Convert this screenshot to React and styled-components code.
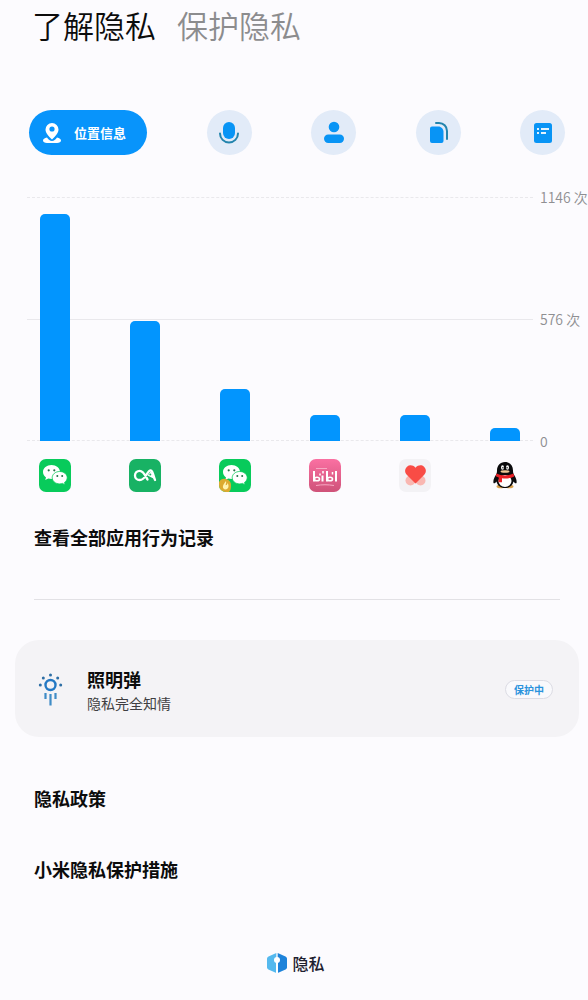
import React, { useState } from 'react';
import styled, { createGlobalStyle } from 'styled-components';

const GlobalStyle = createGlobalStyle`
  * {
    box-sizing: border-box;
  }

  body {
    margin: 0;
    background-color: #fcfbfe;
    color: #0c0c0c;
    font-family: "Noto Sans CJK SC", sans-serif;
  }

  button {
    font-family: inherit;
    cursor: pointer;
  }
`;

const Page = styled.div`
  display: flex;
  flex-direction: column;
  min-height: 100vh;
  overflow-x: hidden;
`;

const Header = styled.header`
  display: flex;
  gap: 21px;
  padding: 2px 32px 0;
`;

const HeaderTab = styled.button`
  border: none;
  padding: 0;
  background: none;
  color: ${props => props.$active ? '#0c0c0c' : '#8c8c8e'};
  font-size: 31px;
  font-weight: 350;
  line-height: 46px;
`;

const Permissions = styled.nav`
  display: flex;
  justify-content: space-between;
  align-items: center;
  padding: 62px 23px 0 29px;
`;

const PermissionButton = styled.button`
  display: flex;
  align-items: center;
  justify-content: ${props => props.$active ? 'flex-start' : 'center'};
  gap: 12px;
  width: ${props => props.$active ? '118px' : '45px'};
  height: 45px;
  border: none;
  border-radius: 23px;
  padding: ${props => props.$active ? '0 0 0 13px' : '0'};
  background-color: ${props => props.$active ? '#0894fb' : '#e2ebf8'};
  color: ${props => props.$active ? '#ffffff' : '#0894f5'};
  font-size: 13px;
  font-weight: 700;
  white-space: nowrap;

  svg {
    flex: none;
  }
`;

const Chart = styled.section`
  display: grid;
  grid-template-columns: 1fr 48px;
  column-gap: 7px;
  padding: 32px 0 0 27px;
`;

const Plot = styled.div`
  display: grid;
  height: 264px;
  padding: 10px 0;
`;

const GridLines = styled.div`
  grid-area: 1 / 1;
  display: flex;
  flex-direction: column;
  justify-content: space-between;
`;

const GridLine = styled.div`
  border-top: 1px ${props => props.$dashed ? 'dashed' : 'solid'} #e9e8ec;
`;

const Bars = styled.div`
  grid-area: 1 / 1;
  display: flex;
  justify-content: space-between;
  align-items: flex-end;
  padding: 0 13px;
`;

const Bar = styled.div`
  width: 30px;
  border-radius: 5px 5px 0 0;
  background-color: #0295fe;
`;

const Scale = styled.div`
  display: flex;
  flex-direction: column;
  justify-content: space-between;
  color: #8f8f92;
  font-size: 14px;
  font-weight: 350;
  line-height: 20px;
  white-space: nowrap;
`;

const Apps = styled.div`
  display: flex;
  justify-content: space-between;
  padding: 8px 12px 0;

  svg {
    display: block;
  }
`;

const RowLink = styled.a`
  display: block;
  padding: 0 34px;
  color: #0c0c0c;
  font-size: 18px;
  font-weight: 700;
  line-height: 26px;
  text-decoration: none;
`;

const Records = styled.section`
  padding-top: 32px;
`;

const Divider = styled.hr`
  width: auto;
  margin: 49px 28px 0 34px;
  border: none;
  border-top: 1px solid #e2e1e5;
`;

const FlareCard = styled.section`
  display: flex;
  align-items: center;
  margin: 40px 9px 0 15px;
  padding: 25px 26px 24px 23px;
  border-radius: 24px;
  background-color: #f4f3f6;
`;

const FlareText = styled.div`
  flex: 1;
  margin-left: 24px;
`;

const FlareTitle = styled.h2`
  margin: 0;
  font-size: 18px;
  font-weight: 700;
  line-height: 28px;
`;

const FlareNote = styled.p`
  margin: 0;
  color: #3f3f42;
  font-size: 14px;
  line-height: 20px;
`;

const Badge = styled.span`
  border: 1px solid #dcdce4;
  border-radius: 10px;
  padding: 0 8px;
  background-color: #f9f9fc;
  color: #2a93dc;
  font-size: 10px;
  font-weight: 700;
  line-height: 17px;
`;

const Policies = styled.section`
  display: flex;
  flex-direction: column;
  gap: 45px;
  padding-top: 48px;
`;

const Footer = styled.footer`
  display: flex;
  justify-content: center;
  align-items: center;
  gap: 5px;
  padding: 69px 0 20px 4px;
  color: #20202e;
  font-size: 16px;
  font-weight: 500;
  line-height: 24px;
`;

const LocationIcon = () => (
  <svg width="20" height="22" viewBox="0 0 20 22" fill="none">
    <path d="M5 15.500C2.500 16 1 17 1 18.500c0 1.500 1.500 2.500 4 2.500h10c2.500 0 4-1 4-2.500 0-1.500-1.500-2.500-4-3-1.500 2-3 3.500-5 3.500s-3.500-1.500-5-3.500z" fill="currentColor" />
    <path d="M10 1a6.500 6.500 0 0 0-6.500 6.500C3.500 11 6.500 14 10 17.500 13.500 14 16.500 11 16.500 7.500A6.500 6.500 0 0 0 10 1z" fill="currentColor" />
    <circle cx="10" cy="7" r="2.600" fill="#0894fb" />
  </svg>
);

const MicIcon = () => (
  <svg width="22" height="24" viewBox="0 0 22 24" fill="none">
    <rect x="5" y="1" width="12" height="17" rx="6" fill="currentColor" />
    <path d="M2 12.500a9 9 0 0 0 18 0" stroke="#2384ad" strokeWidth="2" strokeLinecap="round" />
  </svg>
);

const ContactIcon = () => (
  <svg width="22" height="24" viewBox="0 0 22 24" fill="currentColor">
    <circle cx="11" cy="6" r="5.300" />
    <rect x="1" y="13.500" width="20" height="8.500" rx="4.200" />
  </svg>
);

const FilesIcon = () => (
  <svg width="22" height="24" viewBox="0 0 22 24" fill="none">
    <path d="M5 5.500h6.500c2.500 0 5 2.500 5 5V20a2 2 0 0 1-2 2H5a2 2 0 0 1-2-2V7.500a2 2 0 0 1 2-2z" fill="currentColor" />
    <path d="M9 2h3c4.500 0 8 3.500 8 8v8" stroke="#2384ad" strokeWidth="2" strokeLinecap="round" />
  </svg>
);

const NoteIcon = () => (
  <svg width="20" height="24" viewBox="0 0 20 24" fill="none">
    <rect x="1" y="2" width="18" height="20" rx="2.500" fill="currentColor" />
    <path d="M4 8h2M8 8h8M4 12h2M8 12h5" stroke="#e2f3fd" strokeWidth="2" />
  </svg>
);

const WeChatIcon = ({ twin }) => (
  <svg width="32" height="33" viewBox="0 0 32 33">
    <rect width="32" height="33" rx="7" fill="#08cb5b" />
    <path d="M12.500 6C7.800 6 4 9 4 13c0 2.200 1.100 4.100 3 5.400l-.8 2.600 3.100-1.600c1 .3 2.100.5 3.200.5 4.700 0 8.500-3 8.500-6.900S17.200 6 12.500 6z" fill="#fff" />
    <path d="M20.700 12.500c-4.300 0-7.500 2.800-7.500 6.200s3.300 6.200 7.500 6.200c1 0 2-.2 2.800-.5l2.700 1.500-.7-2.500c1.700-1.200 2.700-2.800 2.700-4.700 0-3.400-3.300-6.200-7.500-6.200z" fill="#fff" stroke="#08cb5b" strokeWidth=".8" />
    <circle cx="9.700" cy="11.300" r="1.100" fill="#267448" />
    <circle cx="15.300" cy="11.300" r="1.100" fill="#267448" />
    <circle cx="18.300" cy="17" r="1" fill="#267448" />
    <circle cx="23.200" cy="17" r="1" fill="#267448" />
    {twin && (
      <>
        <path d="M0 23a6.500 6.500 0 0 1 12 4c0 2.500-.5 4.500-2 6H7a7 7 0 0 1-7-7z" fill="#dcaa30" />
        <path d="M7 22c.8 2-.8 3-.2 4.200C8 26 8.500 25 8.500 24c2 3 1 6-2 6.500C3 30 3 26.500 7 22z" fill="#fff3b0" />
      </>
    )}
  </svg>
);

const LoopIcon = () => (
  <svg width="32" height="33" viewBox="0 0 32 33" fill="none">
    <rect width="32" height="33" rx="7" fill="#18b264" />
    <path d="M18.500 20.500C16.500 17 14.500 11.800 10.800 11.800c-2.800 0-4.800 2-4.800 4.700s2 4.500 4.600 4.500c3.400 0 5.400-2.800 7-5.500 1.200-2 2.400-4.200 4-4.200 1.400 0 2 2.200 4.400 9.700" stroke="#fff" strokeWidth="2.300" strokeLinejoin="round" strokeLinecap="round" />
    <path d="M18.500 16.500l7 3.500-3.500-8z" fill="#fff" />
    <circle cx="21.300" cy="15.500" r="1" fill="#18b264" />
  </svg>
);

const BiliIcon = () => (
  <svg width="32" height="33" viewBox="0 0 32 33">
    <defs>
      <linearGradient id="pink" x1="0" y1="0" x2="0" y2="1">
        <stop offset="0" stopColor="#fa70a2" />
        <stop offset="1" stopColor="#cf5279" />
      </linearGradient>
    </defs>
    <rect width="32" height="33" rx="7" fill="url(#pink)" />
    <path d="M7 9.500h11M7 26.500c6-1 12-1 18 0" stroke="#f7a8c3" strokeWidth="1" fill="none" />
    <path d="M5 12v10.500M13.500 16.500v6M18 12v10.500M27 12v10.500" stroke="#fff" strokeWidth="2" />
    <ellipse cx="8" cy="20" rx="2.500" ry="1.800" stroke="#fff" strokeWidth="1.600" fill="none" />
    <ellipse cx="21" cy="20" rx="2.500" ry="1.800" stroke="#fff" strokeWidth="1.600" fill="none" />
    <path d="M11 14.500v2M14 12v2.500M23.500 13v2.500" stroke="#fff" strokeWidth="1.500" />
  </svg>
);

const HealthIcon = () => (
  <svg width="32" height="33" viewBox="0 0 32 33">
    <rect width="32" height="33" rx="7" fill="#f3f2f5" />
    <circle cx="11.500" cy="21.500" r="5" fill="#f9b7b1" />
    <circle cx="21.500" cy="21.500" r="5" fill="#f9b7b1" />
    <path d="M16.500 24.500L8 16c-2.500-2.500-2.500-6 0-8.300 2.500-2.200 6-1.700 8.500 1 2.500-2.700 6-3.200 8.500-1 2.500 2.300 2.500 5.800 0 8.300z" fill="#f94c45" />
  </svg>
);

const PenguinIcon = () => (
  <svg width="32" height="33" viewBox="0 0 32 33">
    <ellipse cx="11.500" cy="27.500" rx="4" ry="1.800" fill="#d9a04a" />
    <ellipse cx="20.500" cy="27.500" rx="4" ry="1.800" fill="#d9a04a" />
    <path d="M16 3c-5 0-8 3.700-8 8.500 0 2-.3 3-1.200 4.500-1.800 3-2.800 5.500-2.300 8 .7 1 2-.2 3-1.500C8.500 26.800 11.500 29 16 29s7.500-2.200 8.500-6.500c1 1.300 2.300 2.500 3 1.500.5-2.500-.5-5-2.300-8-.9-1.500-1.200-2.500-1.200-4.500C24 6.700 21 3 16 3z" fill="#0b0b0d" />
    <ellipse cx="16" cy="22" rx="6.500" ry="6" fill="#fff" />
    <ellipse cx="13.500" cy="8.500" rx="1.500" ry="2.300" fill="#fff" />
    <ellipse cx="18.500" cy="8.500" rx="1.500" ry="2.300" fill="#fff" />
    <circle cx="13.900" cy="8.800" r=".7" fill="#111" />
    <circle cx="18.100" cy="8.800" r=".7" fill="#111" />
    <ellipse cx="16" cy="12.500" rx="4.500" ry="1.300" fill="#efc795" />
    <path d="M7.500 14.500c5 2.500 12 2.500 17 0l.7 3c-3.500 1.800-8 2.300-12.200 1.800v4H9.500l.3-4.700-3-1.300z" fill="#ea1f25" />
  </svg>
);

const FlareIcon = () => (
  <svg width="25" height="33" viewBox="0 0 25 33" fill="none">
    <circle cx="12.500" cy="12" r="5" stroke="#2479c4" strokeWidth="2.400" />
    <g fill="#2d6ea5">
      <circle cx="12.500" cy="2" r="1.500" />
      <circle cx="5.300" cy="5" r="1.500" />
      <circle cx="19.700" cy="5" r="1.500" />
      <circle cx="2.300" cy="12" r="1.500" />
      <circle cx="22.700" cy="12" r="1.500" />
    </g>
    <path d="M7.500 20v6M12.500 21v11.500M17.500 20v6" stroke="#3f8cc6" strokeWidth="2.200" />
  </svg>
);

const PrivacyLogo = () => (
  <svg width="20" height="22" viewBox="0 0 20 22">
    <path d="M9.300 1L1.500 4.500C.6 5 0 5.700 0 6.700v8.600c0 1 .5 1.700 1.400 2.200L9.300 21z" fill="#55b9ee" />
    <path d="M10.700 1l7.800 3.500c.9.500 1.500 1.200 1.500 2.200v8.600c0 1-.5 1.700-1.400 2.200L10.700 21z" fill="#1e83da" />
    <circle cx="10" cy="8" r="3" fill="#fff" />
    <path d="M9 8h2v13H9z" fill="#fff" />
  </svg>
);

const permissions = [
  { id: 'location', label: '位置信息', icon: <LocationIcon /> },
  { id: 'mic', label: '麦克风', icon: <MicIcon /> },
  { id: 'contacts', label: '联系人', icon: <ContactIcon /> },
  { id: 'files', label: '文件', icon: <FilesIcon /> },
  { id: 'notes', label: '记录', icon: <NoteIcon /> },
];

const apps = [
  { id: 1, count: 1066, icon: <WeChatIcon /> },
  { id: 2, count: 564, icon: <LoopIcon /> },
  { id: 3, count: 242, icon: <WeChatIcon twin /> },
  { id: 4, count: 122, icon: <BiliIcon /> },
  { id: 5, count: 122, icon: <HealthIcon /> },
  { id: 6, count: 60, icon: <PenguinIcon /> },
];

const MAX_COUNT = 1146;

const App = () => {
  const [page, setPage] = useState('learn');
  const [permission, setPermission] = useState('location');

  return (
    <Page>
      <GlobalStyle />
      <Header>
        <HeaderTab $active={page === 'learn'} onClick={() => setPage('learn')}>了解隐私</HeaderTab>
        <HeaderTab $active={page === 'protect'} onClick={() => setPage('protect')}>保护隐私</HeaderTab>
      </Header>

      <Permissions>
        {permissions.map(item => (
          <PermissionButton
            key={item.id}
            $active={item.id === permission}
            aria-label={item.label}
            onClick={() => setPermission(item.id)}
          >
            {item.icon}
            {item.id === permission && item.label}
          </PermissionButton>
        ))}
      </Permissions>

      <Chart>
        <Plot>
          <GridLines>
            <GridLine $dashed />
            <GridLine />
            <GridLine $dashed />
          </GridLines>
          <Bars>
            {apps.map(app => (
              <Bar key={app.id} style={{ height: `${app.count / MAX_COUNT * 100}%` }} />
            ))}
          </Bars>
        </Plot>
        <Scale>
          <span>1146 次</span>
          <span>576 次</span>
          <span>0</span>
        </Scale>
        <Apps>
          {apps.map(app => (
            <React.Fragment key={app.id}>{app.icon}</React.Fragment>
          ))}
        </Apps>
      </Chart>

      <Records>
        <RowLink href="#records">查看全部应用行为记录</RowLink>
      </Records>
      <Divider />

      <FlareCard>
        <FlareIcon />
        <FlareText>
          <FlareTitle>照明弹</FlareTitle>
          <FlareNote>隐私完全知情</FlareNote>
        </FlareText>
        <Badge>保护中</Badge>
      </FlareCard>

      <Policies>
        <RowLink href="#policy">隐私政策</RowLink>
        <RowLink href="#measures">小米隐私保护措施</RowLink>
      </Policies>

      <Footer>
        <PrivacyLogo />
        隐私
      </Footer>
    </Page>
  );
};

export default App;
